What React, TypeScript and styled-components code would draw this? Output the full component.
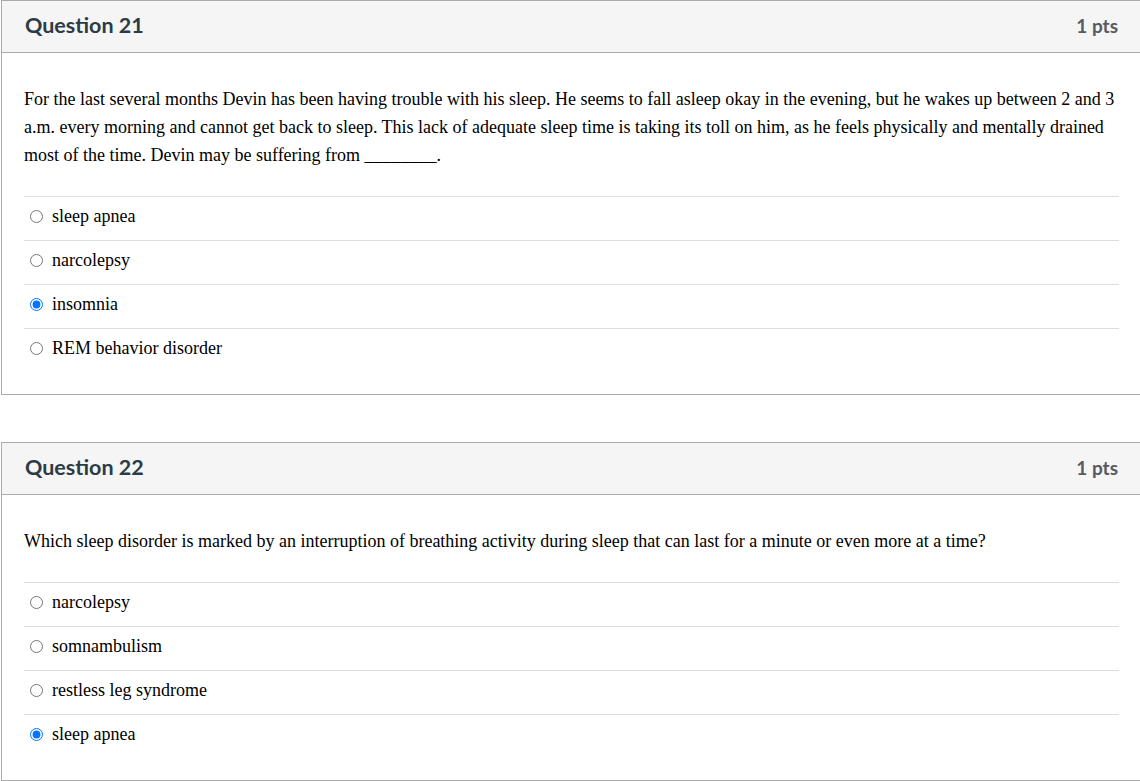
import React from "react";
import styled, { createGlobalStyle } from "styled-components";

interface IQuestion {
  id: number;
  title: string;
  points: string;
  text: React.ReactNode;
  answers: string[];
  selected: number;
}

const GlobalStyle = createGlobalStyle`
  html, body {
    margin: 0;
    padding: 0;
    background: #fff;
    overflow: hidden;
  }
`;

const serif = `"Liberation Serif", "Times New Roman", serif`;

const questions: IQuestion[] = [
  {
    id: 21,
    title: "Question 21",
    points: "1 pts",
    text: (
      <>
        For the last several months Devin has been having trouble with his
        sleep. He seems to fall asleep okay in the evening, but he wakes up
        between 2 and 3 a.m. every morning and cannot get back to sleep. This
        lack of adequate sleep time is taking its toll on him, as he feels
        physically and mentally drained most of the time. Devin may be suffering
        from ________.
      </>
    ),
    answers: ["sleep apnea", "narcolepsy", "insomnia", "REM behavior disorder"],
    selected: 2,
  },
  {
    id: 22,
    title: "Question 22",
    points: "1 pts",
    text: "Which sleep disorder is marked by an interruption of breathing activity during sleep that can last for a minute or even more at a time?",
    answers: [
      "narcolepsy",
      "somnambulism",
      "restless leg syndrome",
      "sleep apnea",
    ],
    selected: 3,
  },
];

export default function App() {
  return (
    <>
      <GlobalStyle />
      <Page>
        {questions.map((q) => (
          <QuestionCard key={q.id}>
            <Header>
              <Title>{q.title}</Title>
              <Points>{q.points}</Points>
            </Header>
            <Body>
              <QuestionText>{q.text}</QuestionText>
              <Answers>
                {q.answers.map((a, i) => (
                  <Answer key={a}>
                    <Radio
                      type="radio"
                      name={`q${q.id}`}
                      defaultChecked={i === q.selected}
                    />
                    <AnswerLabel>{a}</AnswerLabel>
                  </Answer>
                ))}
              </Answers>
            </Body>
          </QuestionCard>
        ))}
      </Page>
    </>
  );
}

const Page = styled.div`
  display: flex;
  flex-direction: column;
  gap: 47px;
  padding-left: 1px;
`;

const QuestionCard = styled.article`
  box-sizing: border-box;
  width: 1141px;
  flex-shrink: 0;
  border: 1px solid #aaaaaa;
  background: #fff;
`;

const Header = styled.header`
  display: flex;
  align-items: center;
  justify-content: space-between;
  box-sizing: border-box;
  height: 52px;
  padding: 0 23px 3px;
  background: #f5f5f5;
  border-bottom: 1px solid #aaaaaa;
`;

const Title = styled.h2`
  margin: 0;
  font-family: Lato, "Liberation Sans", sans-serif;
  font-weight: 700;
  font-size: 21.5px;
  color: #2d3b45;
`;

const Points = styled.div`
  font-family: Lato, "Liberation Sans", sans-serif;
  font-weight: 700;
  font-size: 19px;
  color: #555b60;
`;

const Body = styled.div`
  padding: 32px 22px 22px 22px;
`;

const QuestionText = styled.div`
  font-family: ${serif};
  font-size: 18px;
  line-height: 28px;
  color: #000;
`;

const Answers = styled.div`
  margin-top: 27px;
`;

const Answer = styled.label`
  display: flex;
  align-items: center;
  box-sizing: border-box;
  height: 44px;
  padding: 7px 0 12px;
  border-top: 1px solid #dddddd;
`;

const Radio = styled.input`
  width: 13px;
  height: 13px;
  margin: 0 9px 0 6px;
  accent-color: #0075ff;
`;

const AnswerLabel = styled.span`
  font-family: ${serif};
  font-size: 18px;
  line-height: 24px;
  color: #000;
`;
